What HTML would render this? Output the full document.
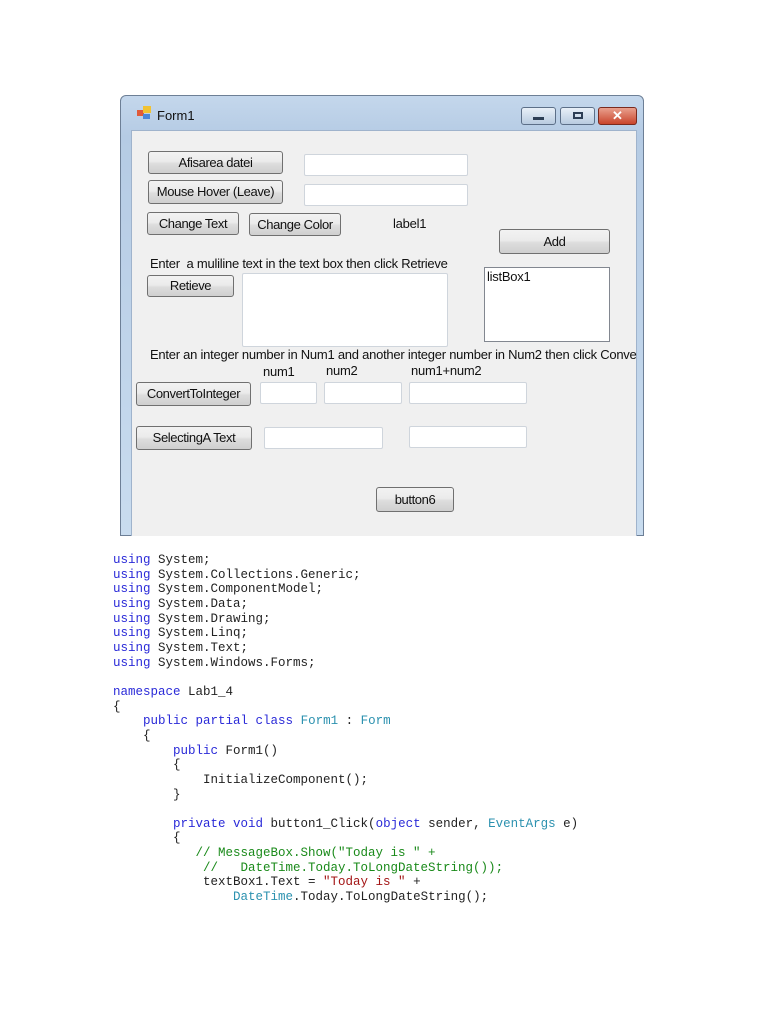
<!DOCTYPE html>
<html><head><meta charset="utf-8"><style>
body{margin:0;width:768px;height:1024px;background:#fff;position:relative;overflow:hidden;font-family:"Liberation Sans",sans-serif}
.a{position:absolute}
.win{left:120px;top:95px;width:524px;height:441px;background:linear-gradient(#c4d7ec,#b5cbe4 40px,#c9dcef);border:1px solid #6d7f96;border-radius:6px 6px 0 0;box-sizing:border-box}
.client{left:131px;top:130px;width:506px;height:406px;background:#f0f0f0;border:1px solid #9fb3cc;border-bottom:none;box-sizing:border-box}
.btn{position:absolute;box-sizing:border-box;border:1px solid #707070;border-radius:3px;background:linear-gradient(#f2f2f2 0%,#ebebeb 45%,#dddddd 55%,#cfcfcf 100%);font-size:13px;letter-spacing:-0.4px;text-align:center;color:#111}
.tb{position:absolute;box-sizing:border-box;border:1px solid #cfd5dc;background:#fff;border-radius:2px}
.lbl{position:absolute;font-size:13px;letter-spacing:-0.25px;color:#111;white-space:nowrap}
.code{position:absolute;font-family:"Liberation Mono",monospace;font-size:12.5px;white-space:pre;color:#222;line-height:14.65px}
.k{color:#2a2ad8}.t{color:#2b91af}.c{color:#1a8a1a}.s{color:#a31515}
</style></head><body>
<div class="a win"></div>
<div class="a" style="left:137px;top:110px;width:7px;height:6px;background:#e05a3a"></div>
<div class="a" style="left:143px;top:106px;width:8px;height:7px;background:#f1c232"></div>
<div class="a" style="left:143px;top:114px;width:7px;height:5px;background:#4a86d8"></div>
<div class="lbl" style="left:157px;top:108px;font-size:13px;letter-spacing:0">Form1</div>
<div class="a" style="left:521px;top:107px;width:35px;height:18px;border:1px solid #5c6f88;border-radius:3px;background:linear-gradient(#e8f0f8,#b8cbe0);box-sizing:border-box"><div class="a" style="left:11px;top:9px;width:11px;height:3px;background:#2c3e55"></div></div>
<div class="a" style="left:560px;top:107px;width:35px;height:18px;border:1px solid #5c6f88;border-radius:3px;background:linear-gradient(#e8f0f8,#b8cbe0);box-sizing:border-box"><div class="a" style="left:12px;top:4px;width:10px;height:7px;border:2px solid #2c3e55;box-sizing:border-box"></div></div>
<div class="a" style="left:598px;top:107px;width:39px;height:18px;border:1px solid #7a2a1e;border-radius:3px;background:linear-gradient(#e9a08e,#c9452c);box-sizing:border-box;color:#fff;font-size:13px;font-weight:bold;text-align:center;line-height:15px">✕</div>
<div class="a client"></div>

<div class="btn" style="left:148px;top:151px;width:135px;height:23px;line-height:21px">Afisarea datei</div>
<div class="tb" style="left:304px;top:154px;width:164px;height:22px"></div>
<div class="btn" style="left:148px;top:180px;width:135px;height:24px;line-height:22px">Mouse Hover (Leave)</div>
<div class="tb" style="left:304px;top:184px;width:164px;height:22px"></div>
<div class="btn" style="left:147px;top:212px;width:92px;height:23px;line-height:21px">Change Text</div>
<div class="btn" style="left:249px;top:213px;width:92px;height:23px;line-height:21px">Change Color</div>
<div class="lbl" style="left:393px;top:216px">label1</div>
<div class="btn" style="left:499px;top:229px;width:111px;height:25px;line-height:23px">Add</div>
<div class="lbl" style="left:150px;top:256px">Enter&nbsp; a muliline text in the text box then click Retrieve</div>
<div class="btn" style="left:147px;top:275px;width:87px;height:22px;line-height:20px">Retieve</div>
<div class="tb" style="left:242px;top:273px;width:206px;height:74px"></div>
<div class="tb" style="left:484px;top:267px;width:126px;height:75px;border-color:#828790;border-radius:0"></div>
<div class="lbl" style="left:487px;top:269px">listBox1</div>
<div class="lbl" style="left:150px;top:347px">Enter an integer number in Num1 and another integer number in Num2 then click Conve</div>
<div class="lbl" style="left:263px;top:364px">num1</div>
<div class="lbl" style="left:326px;top:363px">num2</div>
<div class="lbl" style="left:411px;top:363px">num1+num2</div>
<div class="btn" style="left:136px;top:382px;width:115px;height:24px;line-height:22px">ConvertToInteger</div>
<div class="tb" style="left:260px;top:382px;width:57px;height:22px"></div>
<div class="tb" style="left:324px;top:382px;width:78px;height:22px"></div>
<div class="tb" style="left:409px;top:382px;width:118px;height:22px"></div>
<div class="btn" style="left:136px;top:426px;width:116px;height:24px;line-height:22px">SelectingA Text</div>
<div class="tb" style="left:264px;top:427px;width:119px;height:22px"></div>
<div class="tb" style="left:409px;top:426px;width:118px;height:22px"></div>
<div class="btn" style="left:376px;top:487px;width:78px;height:25px;line-height:23px">button6</div>

<div class="code" style="left:113px;top:553px"><span class="k">using</span> System;
<span class="k">using</span> System.Collections.Generic;
<span class="k">using</span> System.ComponentModel;
<span class="k">using</span> System.Data;
<span class="k">using</span> System.Drawing;
<span class="k">using</span> System.Linq;
<span class="k">using</span> System.Text;
<span class="k">using</span> System.Windows.Forms;

<span class="k">namespace</span> Lab1_4
{
    <span class="k">public partial class</span> <span class="t">Form1</span> : <span class="t">Form</span>
    {
        <span class="k">public</span> Form1()
        {
            InitializeComponent();
        }

        <span class="k">private void</span> button1_Click(<span class="k">object</span> sender, <span class="t">EventArgs</span> e)
        {
           <span class="c">// MessageBox.Show("Today is " +</span>
            <span class="c">//   DateTime.Today.ToLongDateString());</span>
            textBox1.Text = <span class="s">"Today is "</span> +
                <span class="t">DateTime</span>.Today.ToLongDateString();</div>
</body></html>
